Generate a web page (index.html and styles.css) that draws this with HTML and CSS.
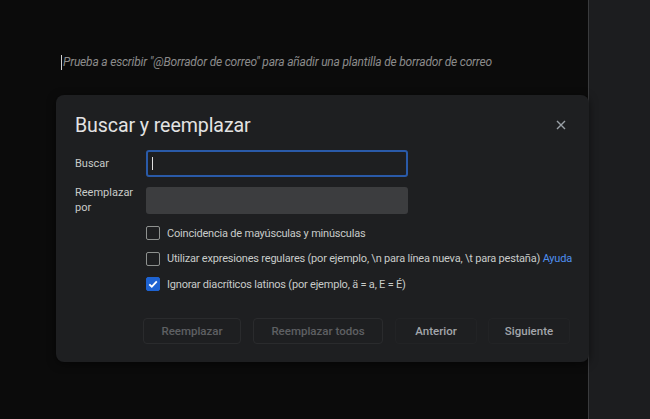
FILE: index.html
```
<!DOCTYPE html>
<html lang="es">
<head>
<meta charset="utf-8">
<link rel="stylesheet" href="styles.css">
</head>
<body>
<div class="app">
  <main class="doc">
    <p class="placeholder"><span class="caret"></span>Prueba a escribir "@Borrador de correo" para añadir una plantilla de borrador de correo</p>
  </main>
  <div class="divider"></div>
  <aside class="side"></aside>
</div>

<div class="dialog" role="dialog">
  <div class="dlg-head">
    <h1 class="dlg-title">Buscar y reemplazar</h1>
    <span class="close">
      <svg width="10" height="10" viewBox="0 0 10 10"><path d="M1 1L9 9M9 1L1 9" stroke="#9aa0a6" stroke-width="1.4" fill="none"/></svg>
    </span>
  </div>
  <div class="field first">
    <label class="lbl">Buscar</label>
    <div class="input focus"><span class="tcaret"></span></div>
  </div>
  <div class="field second">
    <label class="lbl">Reemplazar<br>por</label>
    <div class="input filled"></div>
  </div>
  <div class="opts">
    <div class="opt"><span class="cb"></span><span>Coincidencia de mayúsculas y minúsculas</span></div>
    <div class="opt"><span class="cb"></span><span>Utilizar expresiones regulares (por ejemplo, \n para línea nueva, \t para pestaña) <a class="link">Ayuda</a></span></div>
    <div class="opt"><span class="cb on"><svg width="12" height="12" viewBox="0 0 12 12"><path d="M2.3 6.3L4.8 8.7L9.8 3.4" stroke="#fff" stroke-width="1.8" fill="none"/></svg></span><span>Ignorar diacríticos latinos (por ejemplo, ä = a, E = É)</span></div>
  </div>
  <div class="actions">
    <button class="btn dis w1">Reemplazar</button>
    <button class="btn dis w2">Reemplazar todos</button>
    <button class="btn w3">Anterior</button>
    <button class="btn w4">Siguiente</button>
  </div>
</div>
</body>
</html>
```
FILE: styles.css
```
html, body {
  margin: 0;
  padding: 0;
  width: 650px;
  height: 419px;
  overflow: hidden;
  background: #0b0b0b;
  font-family: Roboto, "Liberation Sans", sans-serif;
}
.app {
  display: grid;
  grid-template-columns: 588px 1px 1fr;
  height: 419px;
}
.doc {
  background: #0b0b0b;
  padding-top: 53px;
  padding-left: 61px;
}
.placeholder {
  margin: 0;
  font-style: italic;
  font-size: 12px;
  color: #8b8b8b;
  line-height: 18px;
  display: flex;
  align-items: center;
  letter-spacing: -0.2px;
}
.caret {
  display: inline-block;
  width: 1px;
  height: 15px;
  background: #d0d0d0;
  margin-right: 1px;
}
.divider { background: #3a3b3d; }
.side { background: #1c1d1f; }

.dialog {
  position: absolute;
  left: 56px;
  top: 95px;
  width: 533px;
  height: 267px;
  box-sizing: border-box;
  background: #1e1f21;
  border-radius: 8px;
  padding: 18px 0 0 19px;
  box-shadow: 0 2px 8px rgba(0,0,0,0.5);
}
.dlg-head {
  display: flex;
  justify-content: space-between;
  align-items: center;
  height: 24px;
  padding-right: 23px;
}
.dlg-title {
  margin: 0;
  font-weight: 400;
  font-size: 19.6px;
  letter-spacing: -0.1px;
  color: #e3e3e3;
}
.close { display: flex; }
.field {
  display: flex;
  align-items: center;
}
.field.first { margin-top: 13px; }
.field.second { margin-top: 8px; }
.lbl {
  width: 71px;
  font-size: 11px;
  line-height: 15px;
  color: #c8cbc9;
}
.input {
  width: 262px;
  height: 27px;
  box-sizing: border-box;
  border-radius: 3px;
  display: flex;
  align-items: center;
}
.input.focus {
  border: 2px solid #2a5aa8;
  background: #1e1f21;
  padding-left: 4px;
}
.tcaret { width: 1px; height: 13px; background: #e0e0e0; }
.input.filled { background: #3c3d3f; }
.opts {
  margin-left: 71px;
  margin-top: 11px;
  display: flex;
  flex-direction: column;
  gap: 11.5px;
}
.opt {
  display: flex;
  align-items: center;
  gap: 7px;
  font-size: 11px;
  letter-spacing: -0.2px;
  color: #c8cbc9;
  height: 14px;
  white-space: nowrap;
}
.cb {
  width: 14px;
  height: 14px;
  box-sizing: border-box;
  border: 1.5px solid #8e918f;
  border-radius: 2px;
  flex: none;
  display: flex;
  align-items: center;
  justify-content: center;
}
.cb.on { background: #1e63d2; border-color: #1e63d2; }
.link { color: #4f8ff0; }
.actions {
  display: flex;
  margin-left: 68px;
  margin-top: 27px;
  gap: 12px;
}
.btn {
  height: 26px;
  font-family: Roboto, "Liberation Sans", sans-serif;
  font-size: 11.5px;
  font-weight: 500;
  background: transparent;
  border: 1px solid #222325;
  border-radius: 4px;
  color: #a3a6ab;
  padding: 0;
}
.btn.dis { color: #5e6063; border-color: #2a2b2d; }
.w1 { width: 98px; }
.w2 { width: 130px; }
.w3 { width: 82px; }
.w4 { width: 82px; margin-left: -1px; }
```
